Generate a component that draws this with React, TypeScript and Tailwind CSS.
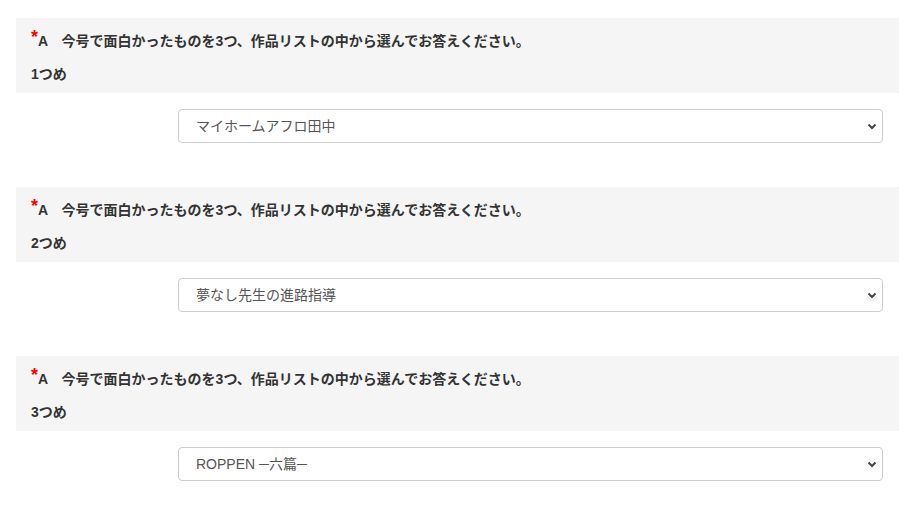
// Survey form: three "pick your favourite" questions, each with a select.

const QUESTION = '今号で面白かったものを3つ、作品リストの中から選んでお答えください。';

const ITEMS = [
  { label: '1つめ', value: 'マイホームアフロ田中' },
  { label: '2つめ', value: '夢なし先生の進路指導' },
  { label: '3つめ', value: 'ROPPEN ─六篇─' },
];

function Chevron() {
  return (
    <svg
      className="pointer-events-none absolute right-[6px] top-1/2 -translate-y-1/2"
      width="10"
      height="8"
      viewBox="0 0 10 8"
    >
      <polyline points="1.5,2.5 5,6 8.5,2.5" fill="none" stroke="#444" strokeWidth="2" />
    </svg>
  );
}

function Question({ label, value }: { label: string; value: string }) {
  return (
    <div className="mb-[44px]">
      <div className="h-[75px] bg-[#f5f5f5] pl-[15px] pr-4 pt-[13px] font-bold text-[14px] text-[#333]">
        <div className="h-[20px] leading-[20px] whitespace-nowrap">
          <span className="relative -top-[3px] text-[18px] leading-none text-[#f00]">*</span>
          <span>A　</span>
          <span>{QUESTION}</span>
        </div>
        <div className="mt-[13px] h-[20px] leading-[20px]">{label}</div>
      </div>
      <div className="mt-[16px] ml-[162px] mr-[16px] relative">
        <select
          defaultValue={value}
          className="w-full h-[34px] appearance-none rounded-[4px] border border-[#ccc] bg-white pl-[17px] pr-8 text-[14px] text-[#555] outline-none"
        >
          <option value={value}>{value}</option>
        </select>
        <Chevron />
      </div>
    </div>
  );
}

export default function App() {
  return (
    <div
      className="w-[921px] h-[516px] overflow-hidden bg-white pt-[18px] pl-[16px] pr-[22px]"
      style={{ fontFamily: '"Liberation Sans", "Noto Sans CJK JP", sans-serif' }}
    >
      {ITEMS.map((item) => (
        <Question key={item.label} label={item.label} value={item.value} />
      ))}
    </div>
  );
}
